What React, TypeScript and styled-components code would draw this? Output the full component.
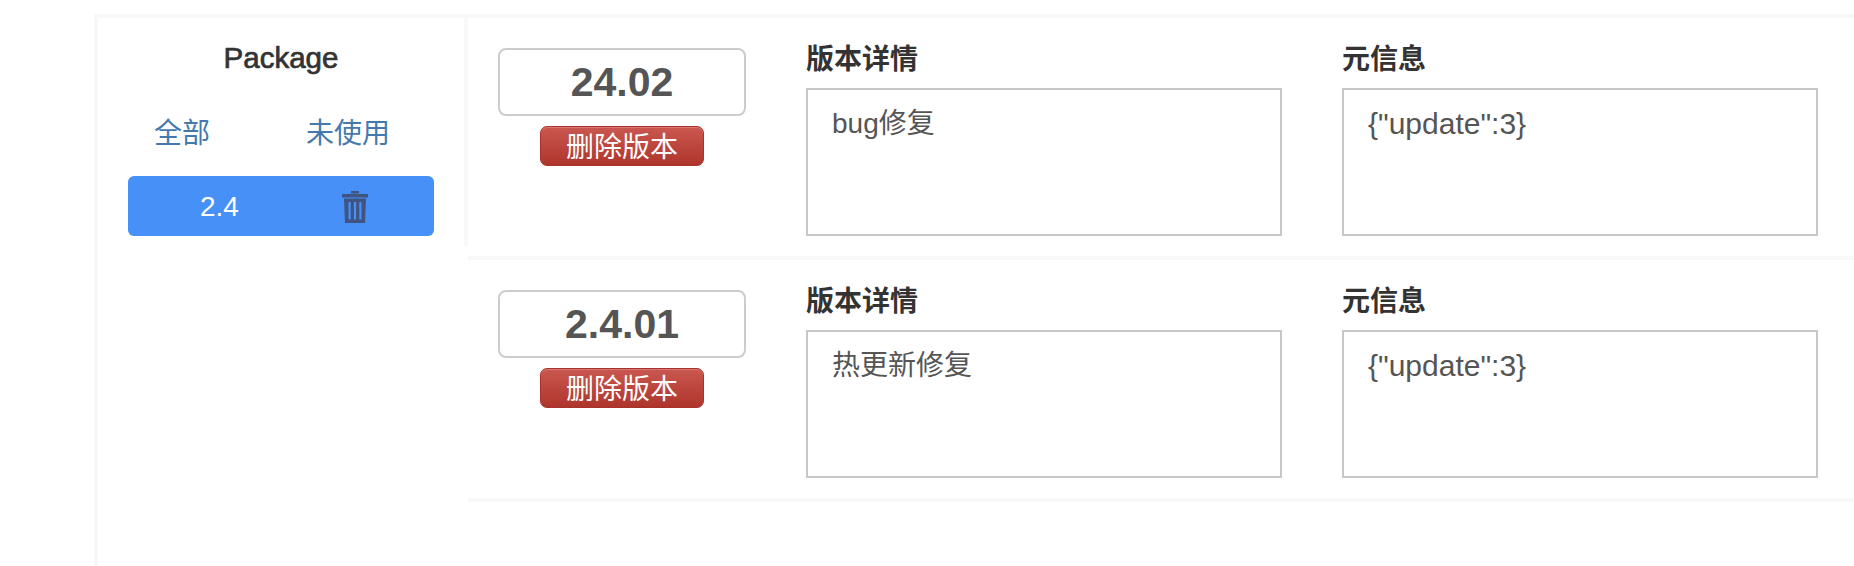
import styled, { createGlobalStyle } from 'styled-components';

const GlobalStyle = createGlobalStyle`
  html, body {
    margin: 0;
    padding: 0;
    background: #fff;
  }
  body {
    font-family: 'Liberation Sans', 'Noto Sans CJK SC', sans-serif;
    overflow: hidden;
  }
`;

const Page = styled.div`
  height: 566px;
  padding: 14px 0 0 94px;
  box-sizing: border-box;
`;

const Panel = styled.div`
  display: flex;
  align-items: flex-start;
  height: 552px;
  box-sizing: border-box;
  border-top: 4px solid #f8f8f8;
  border-left: 4px solid #f8f8f8;
`;

const Sidebar = styled.aside`
  width: 370px;
  height: 228px;
  flex: none;
  box-sizing: border-box;
  padding: 20px 30px 0;
  border-right: 4px solid #f9f9f9;
`;

const SidebarTitle = styled.h3`
  margin: 0;
  font-size: 29.5px;
  line-height: 40px;
  font-weight: 400;
  -webkit-text-stroke: 0.7px #333;
  text-align: center;
  color: #333;
`;

const FilterRow = styled.div`
  display: flex;
  justify-content: space-between;
  margin-top: 36px;
  padding: 0 44px 0 26px;
`;

const FilterLink = styled.a`
  font-size: 28px;
  line-height: 40px;
  color: #4579ae;
  text-decoration: none;
`;

const PackageItem = styled.div`
  display: flex;
  align-items: center;
  justify-content: space-between;
  height: 60px;
  margin-top: 22px;
  padding: 1px 66px 0 72px;
  box-sizing: border-box;
  border-radius: 6px;
  background: #4690f7;
  color: #fff;
  font-size: 28px;
`;

const TrashIcon = styled.svg`
  display: block;
  width: 26px;
  height: 32px;
  color: #3f5480;
`;

const Versions = styled.main`
  flex: 1;
  min-width: 0;
`;

const VersionRow = styled.section`
  display: flex;
  height: 242px;
  box-sizing: border-box;
  border-bottom: 4px solid #f8f8f8;
`;

const VersionColumn = styled.div`
  display: flex;
  flex-direction: column;
  align-items: center;
  width: 248px;
  flex: none;
  margin: 30px 60px 0 30px;
`;

const VersionName = styled.div`
  display: flex;
  align-items: center;
  justify-content: center;
  width: 100%;
  height: 68px;
  box-sizing: border-box;
  border: 2px solid #ccc;
  border-radius: 8px;
  font-size: 41px;
  font-weight: 700;
  color: #555;
`;

const DeleteButton = styled.button`
  width: 164px;
  height: 40px;
  margin-top: 10px;
  padding: 4px 0 0;
  box-sizing: border-box;
  border: 1px solid #a9322a;
  border-radius: 7px;
  background: linear-gradient(#ca5850, #ae352c);
  box-shadow: inset 0 1px 0 rgba(255, 255, 255, 0.2);
  color: #fff;
  font-family: inherit;
  font-size: 28px;
  line-height: 32px;
`;

const Field = styled.div<{ $gap?: number }>`
  display: flex;
  flex-direction: column;
  width: 476px;
  flex: none;
  margin: 22px ${(p) => p.$gap ?? 0}px 0 0;
`;

const FieldLabel = styled.label`
  font-size: 28px;
  line-height: 40px;
  font-weight: 700;
  color: #333;
`;

const FieldText = styled.textarea<{ $size?: number }>`
  display: block;
  width: 100%;
  height: 148px;
  margin-top: 8px;
  padding: 18px 24px;
  box-sizing: border-box;
  border: 2px solid #c8c8c8;
  border-radius: 0;
  outline: none;
  resize: none;
  overflow: hidden;
  background: #fff;
  color: #555;
  font-family: inherit;
  font-size: ${(p) => p.$size ?? 28}px;
  line-height: 32px;
`;

const versions = [
  { name: '24.02', detail: 'bug修复', meta: '{"update":3}' },
  { name: '2.4.01', detail: '热更新修复', meta: '{"update":3}' },
];

export default function App() {
  return (
    <>
      <GlobalStyle />
      <Page>
        <Panel>
          <Sidebar>
            <SidebarTitle>Package</SidebarTitle>
            <FilterRow>
              <FilterLink href="#">全部</FilterLink>
              <FilterLink href="#">未使用</FilterLink>
            </FilterRow>
            <PackageItem>
              <span>2.4</span>
              <TrashIcon viewBox="0 0 26 32">
                <path
                  fill="currentColor"
                  fillRule="evenodd"
                  d="M9 0h8v2.5H9zM0 3h26v3.5H0zM2 7.5h22L23 32H3zM6.5 11v17.5h2.2V11zM11.9 11v17.5h2.2V11zM17.3 11v17.5h2.2V11z"
                />
              </TrashIcon>
            </PackageItem>
          </Sidebar>
          <Versions>
            {versions.map((version) => (
              <VersionRow key={version.name}>
                <VersionColumn>
                  <VersionName>{version.name}</VersionName>
                  <DeleteButton>删除版本</DeleteButton>
                </VersionColumn>
                <Field $gap={60}>
                  <FieldLabel>版本详情</FieldLabel>
                  <FieldText readOnly defaultValue={version.detail} />
                </Field>
                <Field>
                  <FieldLabel>元信息</FieldLabel>
                  <FieldText readOnly $size={30} defaultValue={version.meta} />
                </Field>
              </VersionRow>
            ))}
          </Versions>
        </Panel>
      </Page>
    </>
  );
}
